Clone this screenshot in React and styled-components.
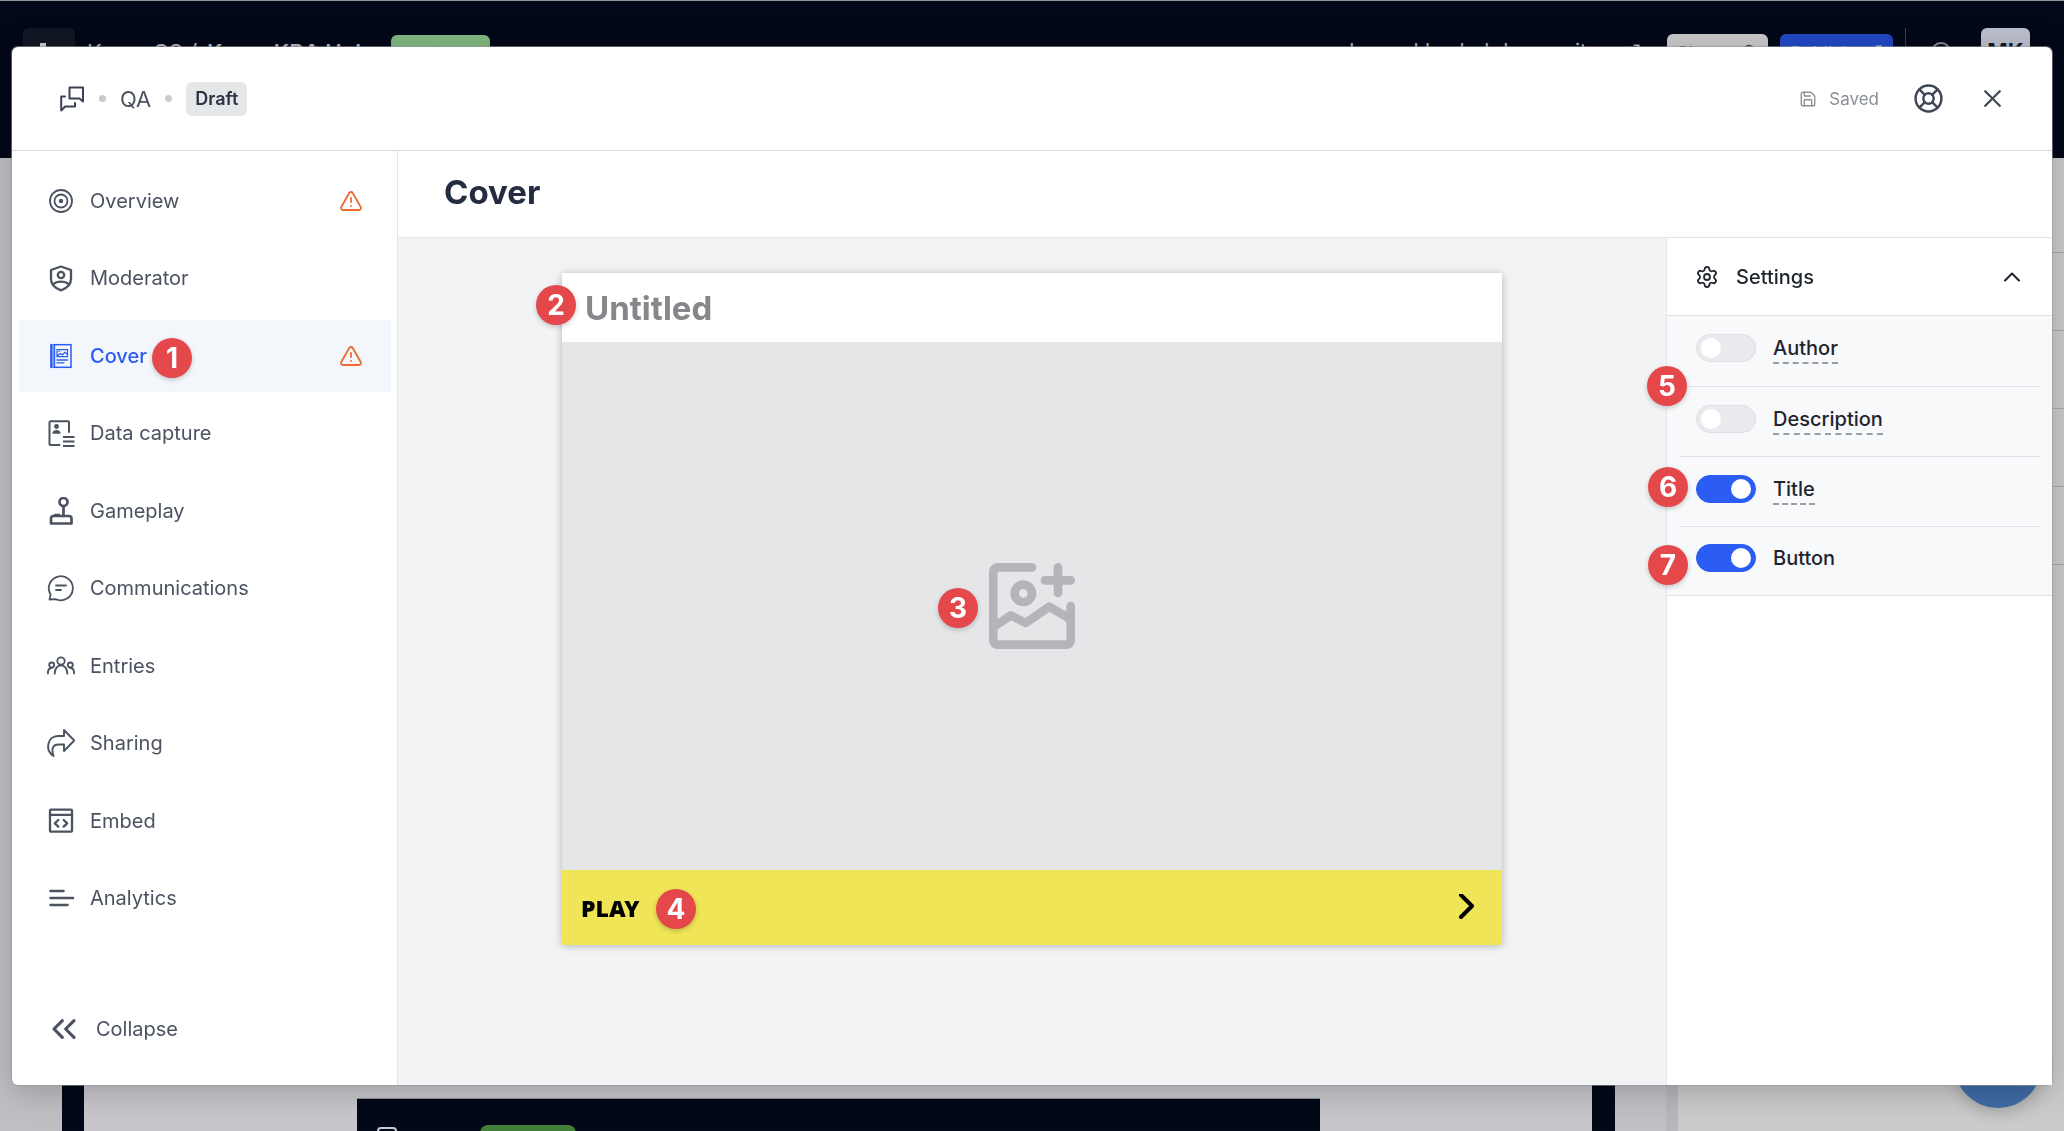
import React from "react";
import styled, { createGlobalStyle } from "styled-components";
import {
  Bell,
  ChevronUp,
  ChevronsLeft,
  ExternalLink,
  LifeBuoy,
  Save,
  Settings,
  TriangleAlert,
  X,
} from "lucide-react";

const GlobalStyle = createGlobalStyle`
  *, *::before, *::after { box-sizing: border-box; }
  body {
    margin: 0;
    overflow: hidden;
    font-family: Inter, "Liberation Sans", sans-serif;
    font-size: 20px;
    color: #4b5260;
  }
  button, input { font: inherit; color: inherit; }
`;

/* ---------- Hub page behind the dialog ---------- */

const Hub = styled.div`
  height: 100vh;
  display: flex;
  flex-direction: column;
  overflow: hidden;
  background: #c7c6cb;
`;

const HubHeader = styled.header`
  flex: none;
  height: 158px;
  padding: 27px 34px 0 23px;
  display: flex;
  align-items: flex-start;
  justify-content: space-between;
  background: #020817;
  border-top: 1px solid #8f9799;
`;

const HubGroup = styled.div`
  display: flex;
  align-items: flex-start;
  gap: ${(p) => p.$gap}px;
`;

const HubLogo = styled.div`
  width: 52px;
  height: 52px;
  padding: 15px 17px;
  border-radius: 6px;
  background: #111722;
  &::before {
    content: "";
    display: block;
    width: 6px;
    height: 20px;
    background: #c9ccd2;
  }
`;

const HubTitle = styled.div`
  padding-top: 10px;
  font-size: 22px;
  line-height: 28px;
  font-weight: ${(p) => (p.$strong ? 600 : 400)};
  color: #b4b7bd;
`;

const HubUrl = styled.div`
  padding: 10px 14px 0 0;
  display: flex;
  align-items: center;
  gap: 24px;
  font-size: 21px;
  line-height: 28px;
  color: #b4b7bd;
`;

const HubTag = styled.span`
  margin-top: 7px;
  padding: 7px 10px;
  border-radius: 6px;
  font-size: 17px;
  line-height: 24px;
  background: #81b781;
  color: #3e6a44;
`;

const HubButton = styled.button`
  margin-top: 6px;
  width: ${(p) => p.$width}px;
  height: 38px;
  padding: 0 10px;
  display: flex;
  align-items: center;
  justify-content: space-between;
  border: 0;
  border-radius: 6px;
  font-size: 18px;
  font-weight: 500;
  background: ${(p) => (p.$primary ? "#2148c5" : "#c9c9c9")};
  color: ${(p) => (p.$primary ? "#c9cfe4" : "#333a4a")};
`;

const HubRule = styled.span`
  width: 1px;
  height: 52px;
  background: #3a404c;
`;

const HubHelp = styled.span`
  width: 20px;
  height: 20px;
  margin: 14px 18px 0 13px;
  border: 2px solid #8a8e96;
  border-radius: 50%;
`;

const HubAvatar = styled.span`
  width: 49px;
  height: 50px;
  border-radius: 6px;
  font-size: 22px;
  line-height: 46px;
  font-weight: 700;
  text-align: center;
  background: #bbbfcc;
  color: #10151f;
`;

const HubBody = styled.div`
  flex: 1;
  min-height: 0;
  display: flex;
  align-items: stretch;
`;

const Strip = styled.div`
  flex: none;
  width: ${(p) => p.$width}px;
  background: ${(p) => p.$color};
`;

const HubPage = styled.div`
  flex: 1;
  display: flex;
  align-items: flex-end;
  padding: 0 272px 0 273px;
  background: #c7c6cb;
`;

const HubCard = styled.div`
  flex: 1;
  height: 33px;
  padding: 28px 20px 0;
  display: flex;
  gap: 16px;
  overflow: hidden;
  border-top: 1px solid #8f9096;
  background: #020817;
  font-size: 20px;
  line-height: 26px;
  color: #c9ccd2;
`;

const CardBox = styled.span`
  width: 20px;
  height: 20px;
  border: 2px solid #c9ccd2;
  border-radius: 4px;
`;

const CardLabel = styled.span`
  width: 51px;
`;

const CardPill = styled.span`
  width: 96px;
  height: 30px;
  margin-top: -2px;
  border-radius: 8px;
  background: #437f3b;
`;

const HubAside = styled.div`
  flex: none;
  width: 386px;
  padding-top: 94px;
  background: #cbcbcb;
`;

const AsideRow = styled.div`
  height: 78px;
  border-top: 1px solid #a9a9b1;
`;

const ChatBubble = styled.div`
  position: fixed;
  right: 22px;
  bottom: 23px;
  width: 88px;
  height: 88px;
  border-radius: 50%;
  background: #3f6ca6;
  box-shadow: 0 4px 16px rgba(0, 0, 0, 0.2);
`;

/* ---------- Dialog ---------- */

const Overlay = styled.div`
  position: fixed;
  inset: 0;
  padding: 47px 12px 46px;
  display: flex;
`;

const Dialog = styled.div`
  flex: 1;
  min-width: 0;
  display: flex;
  flex-direction: column;
  border-radius: 6px;
  background: #fff;
  box-shadow: 0 0 0 1px rgba(150, 150, 160, 0.6), 0 6px 32px rgba(0, 0, 0, 0.22);
`;

const DialogHeader = styled.header`
  flex: none;
  height: 104px;
  padding: 0 45px 0 47px;
  display: flex;
  align-items: center;
  justify-content: space-between;
  border-bottom: 1px solid #d9dadd;
`;

const Crumbs = styled.div`
  display: flex;
  align-items: center;
  gap: 14px;
  color: #3a4252;
`;

const CrumbName = styled.span`
  font-size: 22px;
  color: #4b5260;
`;

const Dot = styled.span`
  width: 7px;
  height: 7px;
  border-radius: 50%;
  background: #c9cbd0;
`;

const Draft = styled.span`
  padding: 0 9px;
  border-radius: 6px;
  font-size: 18px;
  line-height: 34px;
  font-weight: 600;
  background: #e5e7e9;
  color: #2b3344;
`;

const Actions = styled.div`
  display: flex;
  align-items: center;
  gap: 34px;
`;

const SavedState = styled.span`
  display: flex;
  align-items: center;
  gap: 12px;
  font-size: 17px;
  color: #8b8f96;
`;

const IconButton = styled.button`
  display: flex;
  padding: 0;
  border: 0;
  background: none;
  color: #3f4654;
  cursor: pointer;
`;

const DialogBody = styled.div`
  flex: 1;
  min-height: 0;
  display: flex;
`;

const Sidebar = styled.aside`
  flex: none;
  width: 386px;
  padding: 14px 6px 0 7px;
  display: flex;
  flex-direction: column;
  gap: 39px;
  border-right: 1px solid #e2e4e7;
`;

const Nav = styled.nav`
  flex: 1;
  display: flex;
  flex-direction: column;
  justify-content: space-between;
`;

const NavItem = styled.a`
  position: relative;
  height: 72px;
  padding: 0 28px;
  display: flex;
  align-items: center;
  gap: 15px;
  text-decoration: none;
  background: ${(p) => (p.$active ? "#f3f6fb" : "transparent")};
  color: ${(p) => (p.$active ? "#2b5df5" : "#4b5260")};
  font-weight: ${(p) => (p.$active ? 500 : 400)};
`;

const NavLabel = styled.span`
  flex: 1;
`;

const WarningIcon = styled(TriangleAlert)`
  color: #ea6c33;
`;

const Collapse = styled.button`
  height: 112px;
  padding: 0 25px;
  display: flex;
  align-items: center;
  gap: 12px;
  border: 0;
  background: none;
  color: #4b5260;
  cursor: pointer;
`;

const Main = styled.main`
  flex: 1;
  min-width: 0;
  display: flex;
  flex-direction: column;
`;

const PageTitle = styled.h1`
  flex: none;
  margin: 0;
  padding: 0 46px 4px;
  font-size: 33px;
  line-height: 82px;
  font-weight: 700;
  color: #242c3f;
  border-bottom: 1px solid #e2e4e7;
`;

const Workspace = styled.div`
  flex: 1;
  min-height: 0;
  display: flex;
`;

const Canvas = styled.section`
  flex: 1;
  min-width: 0;
  padding: 35px 24px;
  background: #f1f3f5;
`;

const Card = styled.div`
  position: relative;
  max-width: 940px;
  margin: 0 auto;
  background: #fff;
  box-shadow: 0 1px 8px rgba(0, 0, 0, 0.26);
`;

const TitleInput = styled.input`
  display: block;
  width: 100%;
  height: 69px;
  padding: 0 23px;
  border: 0;
  background: none;
  font-size: 33px;
  font-weight: 700;
  color: #85878a;
  outline: none;
  &::placeholder {
    color: #85878a;
    opacity: 1;
  }
`;

const ImageDrop = styled.button`
  width: 100%;
  height: 528px;
  padding: 0;
  display: flex;
  align-items: center;
  justify-content: center;
  border: 0;
  background: #e5e6e8;
  color: #b4b5bb;
  cursor: pointer;
`;

const ImageIconWrap = styled.span`
  position: relative;
  display: flex;
`;

const PlayButton = styled.button`
  width: 100%;
  height: 75px;
  padding: 0 21px 0 19px;
  display: flex;
  align-items: center;
  justify-content: space-between;
  border: 0;
  background: #efe556;
  font-family: "Noto Sans", "Open Sans", sans-serif;
  font-size: 23px;
  font-weight: 900;
  color: #000;
  cursor: pointer;
`;

const PlayLabel = styled.span`
  position: relative;
`;

const Badge = styled.span`
  position: absolute;
  left: ${(p) => p.$left}px;
  top: ${(p) => p.$top}px;
  width: 40px;
  height: 40px;
  border-radius: 50%;
  background: #e5484b;
  box-shadow: 0 2px 5px rgba(0, 0, 0, 0.2);
  font-family: Inter, sans-serif;
  font-size: 28px;
  line-height: 40px;
  font-weight: 700;
  text-align: center;
  color: #fff;
`;

const SettingsPanel = styled.aside`
  flex: none;
  width: 386px;
  border-left: 1px solid #e2e4e7;
  background: #fff;
`;

const SettingsHeader = styled.button`
  width: 100%;
  height: 78px;
  padding: 0 26px 0 28px;
  display: flex;
  align-items: center;
  gap: 17px;
  border: 0;
  border-bottom: 1px solid #dfe1e5;
  background: none;
  font-weight: 500;
  color: #1f242e;
  text-align: left;
  cursor: pointer;
`;

const SettingsName = styled.span`
  flex: 1;
`;

const Options = styled.div`
  position: relative;
  padding: 0 12px;
  background: #f8f9fb;
  border-bottom: 1px solid #e2e4e7;
`;

const Option = styled.div`
  height: ${(p) => (p.$last ? 69 : 70)}px;
  padding: 0 17px 6px;
  display: flex;
  align-items: center;
  gap: 17px;
  & + & {
    border-top: 1px solid #dfe1e5;
  }
`;

const Switch = styled.input`
  appearance: none;
  flex: none;
  width: 60px;
  height: 28px;
  margin: 0;
  padding: 4px;
  display: flex;
  align-items: center;
  border: 1px solid #dddfe3;
  border-radius: 14px;
  background: #eaebee;
  cursor: pointer;
  &::before {
    content: "";
    width: 20px;
    height: 20px;
    border-radius: 50%;
    background: #fff;
  }
  &:checked {
    justify-content: flex-end;
    border-color: #2b5df5;
    background: #2b5df5;
  }
`;

const OptionLabel = styled.label`
  padding-top: 3px;
  font-weight: 500;
  line-height: 27px;
  color: #1f242e;
  border-bottom: 2px dashed ${(p) => (p.$hint ? "#9a9da2" : "transparent")};
`;

/* ---------- Icons ---------- */

const Svg = ({ size = 28, box = 28, stroke = 2, children }) => (
  <svg
    width={size}
    height={size}
    viewBox={`0 0 ${box} ${box}`}
    fill="none"
    stroke="currentColor"
    strokeWidth={stroke}
    strokeLinecap="round"
    strokeLinejoin="round"
    aria-hidden="true"
  >
    {children}
  </svg>
);

const OverviewIcon = () => (
  <Svg stroke={1.8}>
    <circle cx="14" cy="14" r="11" />
    <circle cx="14" cy="14" r="6.5" />
    <circle cx="14" cy="14" r="1.3" fill="currentColor" />
  </Svg>
);

const ModeratorIcon = () => (
  <Svg stroke={2.3}>
    <path d="M14 2.5 24 6v9c0 5-4.300 9.300-10 11.400C8.300 24.300 4 20 4 15V6z" />
    <circle cx="14" cy="11" r="3.200" />
    <path d="M6 20.500c4-3.700 12-3.700 16 0" />
  </Svg>
);

const CoverIcon = () => (
  <Svg stroke={1.5}>
    <rect x="4" y="2.700" width="20" height="22.600" strokeLinejoin="miter" />
    <path d="M5.700 3v22" stroke="#7797f8" strokeWidth="2" />
    <path d="M7.400 3v22M4.300 3v22" />
    <rect x="10" y="7.700" width="10.500" height="7" strokeWidth="1.200" />
    <path d="M10.300 14l3-2.500 2 1.200 2.700-2.500 2.300 2M12 9.500h.6" strokeWidth="1.200" />
    <path d="M10 18h10.500M10 20.800h7" strokeWidth="1.300" />
  </Svg>
);

const DataCaptureIcon = () => (
  <Svg>
    <path d="M22 13V3.300a1 1 0 0 0-1-1H3.500a1 1 0 0 0-1 1V25a1 1 0 0 0 1 1h9" />
    <circle cx="9.500" cy="7.500" r="2.400" fill="currentColor" stroke="none" />
    <path d="M5.300 14.700c0-5 8.400-5 8.400 0z" fill="currentColor" stroke="none" />
    <path d="M16 18h11.500M16 22.500h11.500M16 27h11.500" strokeLinecap="butt" />
  </Svg>
);

const GameplayIcon = () => (
  <Svg stroke={2.7}>
    <circle cx="16.500" cy="5" r="4" />
    <path d="M16.500 9.500V19" />
    <path d="M6.500 19h15.500a2.500 2.500 0 0 1 2.500 2.500V26.500h-20.500v-5A2.500 2.500 0 0 1 6.500 19z" />
    <path d="M8 18.200h4" />
  </Svg>
);

const CommunicationsIcon = () => (
  <Svg stroke={1.8}>
    <path d="M2.500 25.500 3.600 20.500A12 12 0 1 1 9 25.200z" />
    <path d="M9 11.500h10M9 16h5" />
  </Svg>
);

const EntriesIcon = () => (
  <Svg stroke={1.8}>
    <circle cx="14" cy="9" r="3.700" />
    <path d="M7.700 21.700c0-11.200 12.600-11.200 12.600 0" />
    <circle cx="4.700" cy="13" r="2.500" />
    <circle cx="23.300" cy="13" r="2.500" />
    <path d="M.9 21.500c0-3 1.300-5.500 3.800-5.500M27.100 21.500c0-3-1.300-5.500-3.800-5.500" />
  </Svg>
);

const SharingIcon = () => (
  <Svg stroke={1.9}>
    <path d="M17 1 27.200 11.500 17 22v-6.500h-5.500c-5.500 0-7.500 4-5 11.500C-2.500 21 .5 7 11 7h6z" />
  </Svg>
);

const EmbedIcon = () => (
  <Svg stroke={2.3}>
    <rect x="3" y="2.700" width="22" height="22" rx="1" />
    <path d="M3 7.800h22M11.300 13l-3.500 3.300 3.500 3.300M16.700 13l3.500 3.300-3.500 3.300" />
  </Svg>
);

const AnalyticsIcon = () => (
  <Svg stroke={2.5}>
    <path d="M3.500 7h13M3.500 14h22.500M3.500 21h17" />
  </Svg>
);

const QaIcon = () => (
  <Svg size={26} box={26} stroke={2}>
    <path d="M10.500 1.500H24v14L20.500 12.500H10.500z" />
    <path d="M6 10.500H2.200v14l4-4H16v-3.500" />
  </Svg>
);

const AddImageIcon = () => (
  <Svg size={86} box={258} stroke={26}>
    <path d="M129 13H26a13 13 0 0 0-13 13v206a13 13 0 0 0 13 13h206a13 13 0 0 0 13-13V129" />
    <circle cx="103" cy="91" r="26" />
    <path d="M207 13v77M168 52h77" />
    <path d="M14 192l51-35 45 23 71-49 64 38" />
  </Svg>
);

const PlayArrow = () => (
  <Svg size={28} box={28} stroke={4}>
    <path d="M8 1l11 11L8 23" />
  </Svg>
);

const navItems = [
  { label: "Overview", icon: OverviewIcon, warning: true },
  { label: "Moderator", icon: ModeratorIcon },
  { label: "Cover", icon: CoverIcon, warning: true, active: true },
  { label: "Data capture", icon: DataCaptureIcon },
  { label: "Gameplay", icon: GameplayIcon },
  { label: "Communications", icon: CommunicationsIcon },
  { label: "Entries", icon: EntriesIcon },
  { label: "Sharing", icon: SharingIcon },
  { label: "Embed", icon: EmbedIcon },
  { label: "Analytics", icon: AnalyticsIcon },
];

const options = [
  { id: "author", label: "Author", on: false, hint: true },
  { id: "description", label: "Description", on: false, hint: true },
  { id: "title", label: "Title", on: true, hint: true },
  { id: "button", label: "Button", on: true, hint: false },
];

function HubBackdrop() {
  return (
    <Hub aria-hidden="true">
      <HubHeader>
        <HubGroup $gap={12}>
          <HubLogo />
          <HubGroup $gap={22}>
            <HubGroup $gap={10}>
              <HubTitle>Komo CS /</HubTitle>
              <HubTitle $strong>Komo KBA Hub</HubTitle>
            </HubGroup>
            <HubTag>Published</HubTag>
          </HubGroup>
        </HubGroup>
        <HubGroup $gap={12}>
          <HubUrl>
            komo-kba-hub.komo.site
            <ExternalLink size={18} />
          </HubUrl>
          <HubButton $width={101} tabIndex={-1}>
            Share
            <Bell size={18} />
          </HubButton>
          <HubButton $width={113} $primary tabIndex={-1}>
            Publish
            <ExternalLink size={18} />
          </HubButton>
          <HubRule />
          <HubHelp />
          <HubAvatar>MK</HubAvatar>
        </HubGroup>
      </HubHeader>
      <HubBody>
        <Strip $width={62} $color="#bfbec2" />
        <Strip $width={22} $color="#020817" />
        <HubPage>
          <HubCard>
            <CardBox />
            <CardLabel>Live</CardLabel>
            <CardPill />
          </HubCard>
        </HubPage>
        <Strip $width={23} $color="#020817" />
        <Strip $width={51} $color="#c1c0c5" />
        <Strip $width={12} $color="#b7b7bc" />
        <HubAside>
          <AsideRow />
          <AsideRow />
          <AsideRow />
          <AsideRow />
          <AsideRow />
        </HubAside>
      </HubBody>
      <ChatBubble />
    </Hub>
  );
}

export default function App() {
  return (
    <>
      <GlobalStyle />
      <HubBackdrop />
      <Overlay>
        <Dialog role="dialog" aria-label="QA">
          <DialogHeader>
            <Crumbs>
              <QaIcon />
              <Dot />
              <CrumbName>QA</CrumbName>
              <Dot />
              <Draft>Draft</Draft>
            </Crumbs>
            <Actions>
              <SavedState>
                <Save size={18} strokeWidth={1.8} />
                Saved
              </SavedState>
              <IconButton aria-label="Help">
                <LifeBuoy size={31} strokeWidth={1.9} />
              </IconButton>
              <IconButton aria-label="Close">
                <X size={29} strokeWidth={1.9} />
              </IconButton>
            </Actions>
          </DialogHeader>
          <DialogBody>
            <Sidebar>
              <Nav>
                {navItems.map(({ label, icon: Icon, warning, active }) => (
                  <NavItem key={label} href="#" $active={active}>
                    <Icon />
                    <NavLabel>{label}</NavLabel>
                    {warning && <WarningIcon size={24} strokeWidth={1.8} />}
                    {active && <Badge $left={133} $top={18}>1</Badge>}
                  </NavItem>
                ))}
              </Nav>
              <Collapse>
                <ChevronsLeft size={40} strokeWidth={1.9} />
                Collapse
              </Collapse>
            </Sidebar>
            <Main>
              <PageTitle>Cover</PageTitle>
              <Workspace>
                <Canvas>
                  <Card>
                    <TitleInput aria-label="Title" placeholder="Untitled" />
                    <ImageDrop aria-label="Add image">
                      <ImageIconWrap>
                        <AddImageIcon />
                        <Badge $left={-51} $top={25}>3</Badge>
                      </ImageIconWrap>
                    </ImageDrop>
                    <PlayButton>
                      <PlayLabel>
                        PLAY
                        <Badge $left={75} $top={-3}>4</Badge>
                      </PlayLabel>
                      <PlayArrow />
                    </PlayButton>
                    <Badge $left={-26} $top={12}>2</Badge>
                  </Card>
                </Canvas>
                <SettingsPanel>
                  <SettingsHeader aria-expanded="true">
                    <Settings size={24} strokeWidth={1.8} />
                    <SettingsName>Settings</SettingsName>
                    <ChevronUp size={28} strokeWidth={1.8} />
                  </SettingsHeader>
                  <Options>
                    {options.map((o, i) => (
                      <Option key={o.id} $last={i === options.length - 1}>
                        <Switch type="checkbox" id={o.id} defaultChecked={o.on} />
                        <OptionLabel htmlFor={o.id} $hint={o.hint}>{o.label}</OptionLabel>
                      </Option>
                    ))}
                    <Badge $left={-20} $top={50}>5</Badge>
                    <Badge $left={-19} $top={151}>6</Badge>
                    <Badge $left={-19} $top={229}>7</Badge>
                  </Options>
                </SettingsPanel>
              </Workspace>
            </Main>
          </DialogBody>
        </Dialog>
      </Overlay>
    </>
  );
}
